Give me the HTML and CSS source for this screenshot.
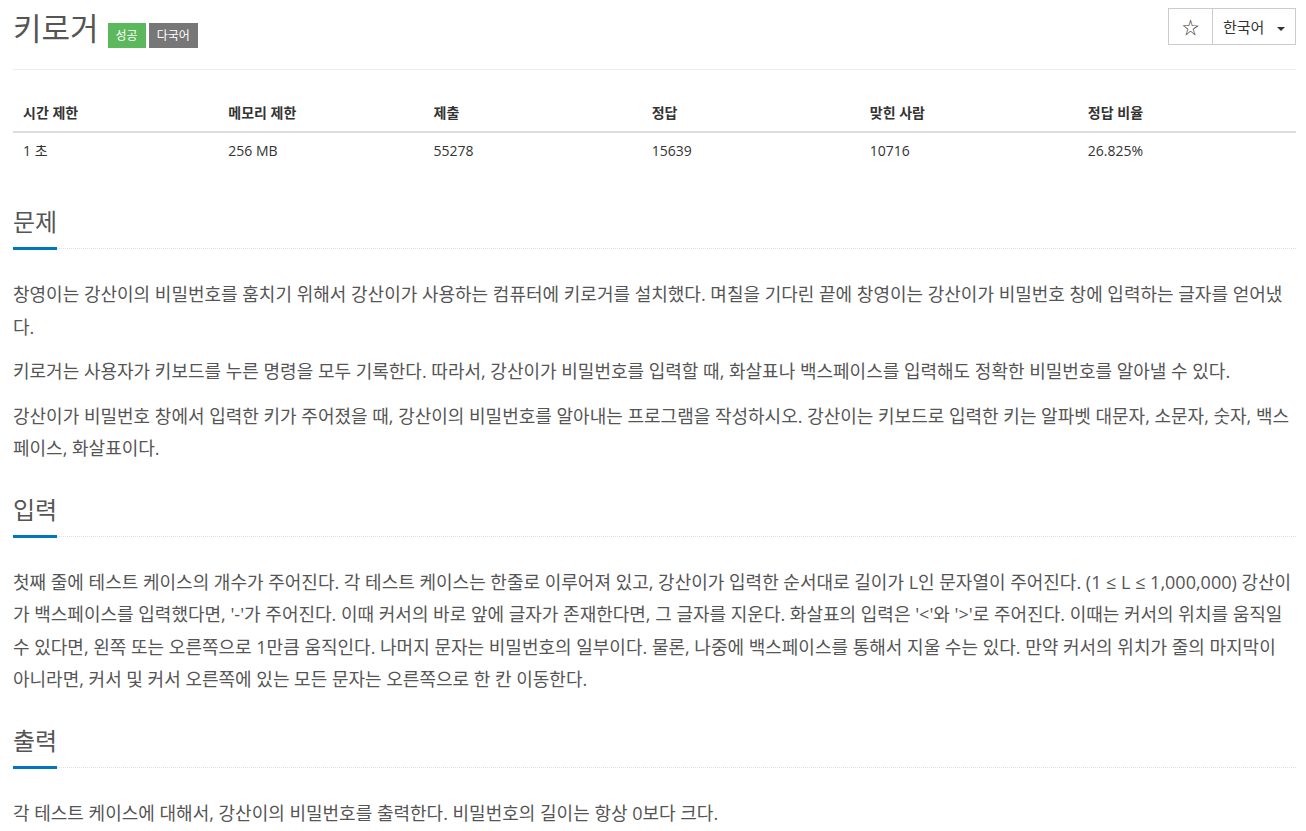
FILE: index.html
```html
<!DOCTYPE html>
<html lang="ko">
<head>
  <meta charset="UTF-8">
  <meta name="viewport" content="width=device-width, initial-scale=1.0">
  <title>키로거</title>
  <link rel="stylesheet" href="styles.css">
</head>
<body>
  <div class="page">
    <div class="page-header">
      <h1 class="problem-title">
        <span>키로거</span>
        <span class="label label-success">성공</span>
        <span class="label label-default">다국어</span>
      </h1>
      <div class="btn-group">
        <button class="btn btn-star">&#9734;</button>
        <button class="btn btn-lang">한국어 <span class="caret"></span></button>
      </div>
    </div>

    <table class="info-table">
      <thead>
        <tr>
          <th class="col-narrow">시간 제한</th>
          <th class="col-narrow">메모리 제한</th>
          <th class="col-wide">제출</th>
          <th class="col-wide">정답</th>
          <th class="col-wide">맞힌 사람</th>
          <th>정답 비율</th>
        </tr>
      </thead>
      <tbody>
        <tr>
          <td>1 초</td>
          <td>256 MB</td>
          <td>55278</td>
          <td>15639</td>
          <td>10716</td>
          <td>26.825%</td>
        </tr>
      </tbody>
    </table>

    <section class="problem-section">
      <div class="headline"><h2>문제</h2></div>
      <div class="problem-text">
        <p>창영이는 강산이의 비밀번호를 훔치기 위해서 강산이가 사용하는 컴퓨터에 키로거를 설치했다. 며칠을 기다린 끝에 창영이는 강산이가 비밀번호 창에 입력하는 글자를 얻어냈다.</p>
        <p>키로거는 사용자가 키보드를 누른 명령을 모두 기록한다. 따라서, 강산이가 비밀번호를 입력할 때, 화살표나 백스페이스를 입력해도 정확한 비밀번호를 알아낼 수 있다.</p>
        <p>강산이가 비밀번호 창에서 입력한 키가 주어졌을 때, 강산이의 비밀번호를 알아내는 프로그램을 작성하시오. 강산이는 키보드로 입력한 키는 알파벳 대문자, 소문자, 숫자, 백스페이스, 화살표이다.</p>
      </div>
    </section>

    <section class="problem-section">
      <div class="headline"><h2>입력</h2></div>
      <div class="problem-text">
        <p>첫째 줄에 테스트 케이스의 개수가 주어진다. 각 테스트 케이스는 한줄로 이루어져 있고, 강산이가 입력한 순서대로 길이가 L인 문자열이 주어진다. (1 ≤ L ≤ 1,000,000) 강산이가 백스페이스를 입력했다면, '-'가 주어진다. 이때 커서의 바로 앞에 글자가 존재한다면, 그 글자를 지운다. 화살표의 입력은 '&lt;'와 '&gt;'로 주어진다. 이때는 커서의 위치를 움직일 수 있다면, 왼쪽 또는 오른쪽으로 1만큼 움직인다. 나머지 문자는 비밀번호의 일부이다. 물론, 나중에 백스페이스를 통해서 지울 수는 있다. 만약 커서의 위치가 줄의 마지막이 아니라면, 커서 및 커서 오른쪽에 있는 모든 문자는 오른쪽으로 한 칸 이동한다.</p>
      </div>
    </section>

    <section class="problem-section">
      <div class="headline"><h2>출력</h2></div>
      <div class="problem-text">
        <p>각 테스트 케이스에 대해서, 강산이의 비밀번호를 출력한다. 비밀번호의 길이는 항상 0보다 크다.</p>
      </div>
    </section>
  </div>
</body>
</html>
```

FILE: styles.css
```css
body {
  margin: 0;
  font-family: "Open Sans", "Noto Sans CJK KR", sans-serif;
  font-size: 14px;
  line-height: 20px;
  color: #333;
  background: #fff;
}
.page {
  display: flex;
  flex-direction: column;
  padding: 0 10px 0 13px;
}
.page-header {
  display: flex;
  justify-content: space-between;
  align-items: flex-start;
  padding-top: 8px;
  height: 61px;
  border-bottom: 1px solid #eee;
}
.problem-title {
  display: flex;
  align-items: baseline;
  margin: 0;
  font-size: 31px;
  font-weight: normal;
  line-height: 40px;
  color: #555;
}
.label {
  display: inline-block;
  font-size: 12px;
  line-height: 15px;
  padding: 5px 8px;
  color: #fff;
}
.label-success {
  margin-left: 9px;
  background-color: #5cb85c;
}
.label-default {
  margin-left: 3px;
  background-color: #777;
}
.btn-group {
  display: flex;
}
.btn {
  height: 37px;
  background: #fff;
  border: 1px solid #ccc;
  color: #333;
  font-family: inherit;
  cursor: pointer;
}
.btn-star {
  width: 45px;
  font-size: 17px;
}
.btn-lang {
  width: 84px;
  margin-left: -1px;
  font-size: 15px;
  text-align: left;
  padding-left: 10px;
}
.caret {
  display: inline-block;
  margin-left: 9px;
  vertical-align: middle;
  border-top: 4px solid #333;
  border-left: 4px solid transparent;
  border-right: 4px solid transparent;
}
.info-table {
  width: 100%;
  margin-top: 25px;
  margin-bottom: 20px;
  border-collapse: collapse;
}
.info-table th,
.info-table td {
  padding: 8px 10px;
  text-align: left;
}
.info-table th.col-narrow {
  width: 16%;
}
.info-table th.col-wide {
  width: 17%;
}
.info-table th {
  font-weight: bold;
  border-bottom: 2px solid #ddd;
}
.problem-section {
  margin-top: 20px;
}
.headline {
  border-bottom: 1px dotted #ddd;
  margin-bottom: 29px;
}
.headline h2 {
  display: inline-block;
  margin: 0 0 -2px;
  padding-bottom: 12px;
  font-size: 24px;
  font-weight: normal;
  line-height: 26px;
  color: #555;
  border-bottom: 3px solid #0076c0;
}
.problem-text {
  font-size: 18px;
  line-height: 32.5px;
  color: #555;
}
.problem-text p {
  margin: 0 0 12px;
}
```
